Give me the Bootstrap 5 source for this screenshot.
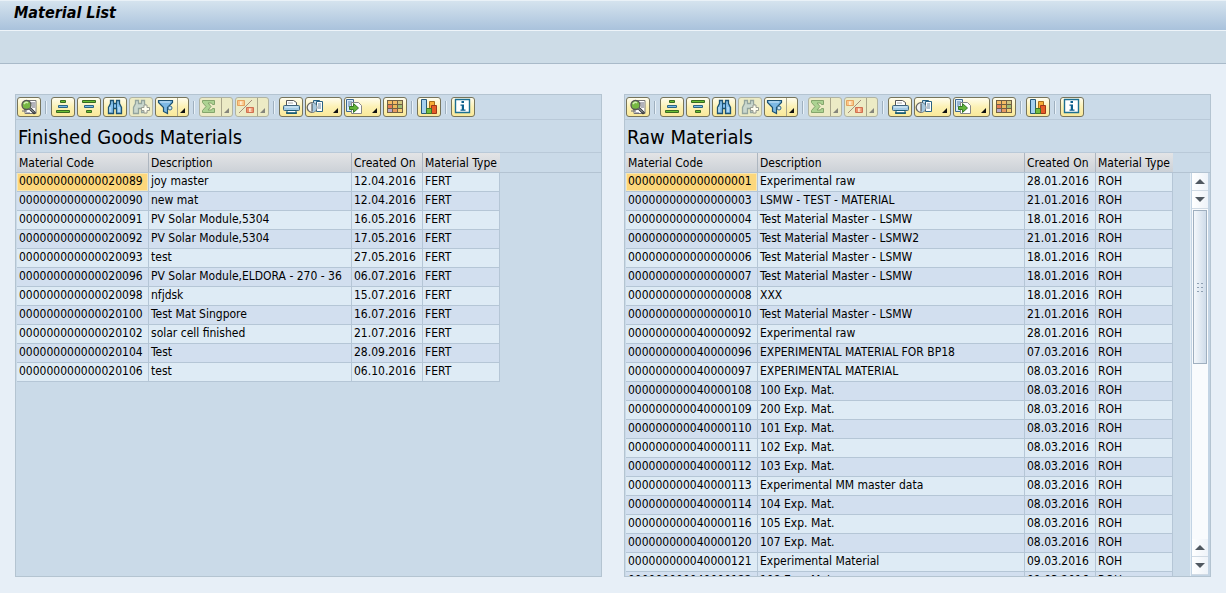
<!DOCTYPE html>
<html lang="en">
<head>
<meta charset="utf-8">
<meta name="viewport" content="width=device-width, initial-scale=1">
<title>Material List</title>
<link href="https://cdn.jsdelivr.net/npm/bootstrap@5.3.0/dist/css/bootstrap.min.css" rel="stylesheet">
<style>
  body { background: #e7eff7; color: #000; font-family: "DejaVu Sans Condensed", "DejaVu Sans", sans-serif; font-size: 12px; line-height: 18px; }
  .title-bar { height: 31px; padding: 0 14px; background: linear-gradient(#d5e3ee, #a9c2dc); border-top: 1px solid #e9f1f7; border-bottom: 1px solid #eef4f9; }
  .title-bar h1 { font-size: 16px; line-height: 24px; font-weight: 700; font-style: italic; }
  .app-bar { height: 33px; background: #cddce7; border-bottom: 1px solid #a9bac9; }
  .workspace { padding: 30px 15px 16px; gap: 22px; }
  .panel { flex: 1 1 0; min-width: 0; background: #cadae8; border: 1px solid #b4c4d1; }
  .tools { height: 25px; padding: 0 1px; gap: 2px; border-bottom: 1px solid #b9c9d8; }
  .tools, .panel h2, .grid-head { flex-shrink: 0; }
  .tool { position: relative; display: flex; align-items: center; flex: none; width: 24px; height: 20px; padding: 0; border: 1px solid #77745a; border-radius: 3px; background: linear-gradient(#fffdee, #fcf1b4 50%, #fae99a); }
  .tool svg { width: 22px; height: 18px; flex: none; }
  .tool.drop { width: 34px; }
  .tool.drop.broad { width: 37px; }
  .tool.drop::after { content: ""; position: absolute; right: 3px; bottom: 3px; border-left: 5px solid transparent; border-bottom: 5px solid #111; }
  .tool.split::before { content: ""; position: absolute; left: 21px; top: 0; bottom: 0; border-left: 1px solid #a9a68a; }
  .tool:disabled { border-color: #b0b3a2; background: #ecebc5; }
  .tool:disabled::after { border-bottom-color: #85867c; }
  .divider { width: 6px; height: 13px; flex: none; background: linear-gradient(90deg, transparent 2px, #9fb0bf 2px, #9fb0bf 3px, #e8f1f8 3px, #e8f1f8 4px, transparent 4px); }
  .panel h2 { height: 33px; padding: 0 2px; font-size: 20px; line-height: 34px; font-weight: 400; border-bottom: 1px solid #b9c9d8; }
  .grid-head { border-bottom: 1px solid #b3c3d2; }
  .grid { margin-left: 1px; table-layout: fixed; border-collapse: separate; border-spacing: 0; white-space: nowrap; }
  .grid th, .grid td { height: 19px; padding: 0 0 0 2px; overflow: hidden; font-weight: 400; line-height: 18px; }
  .grid th { padding-top: 1px; border-right: 1px solid #adb6c0; background: linear-gradient(#e3e4e6, #ccd1d7); }
  .grid th:last-child { border-right: 0; }
  .grid td { padding-bottom: 2px; line-height: 16px; border-right: 1px solid #b5c6d6; border-bottom: 1px solid #b5c6d6; background: #deebf5; }
  .grid tr:nth-child(even) td { background: #d2dfef; }
  .grid tr:first-child td:first-child { background: #fcd77c; box-shadow: inset 0 0 0 1px #f8e6b4; }
  .c-code { width: 132px; } .c-desc { width: 203px; } .c-wide { width: 267px; } .c-date { width: 71px; } .c-type { width: 77px; }
  .scroll { width: 20px; padding: 0 2px 1px 1px; border-left: 1px solid #e6eef5; background: #c3d4e4; }
  .scroll button { width: 100%; height: 18px; padding: 0; border: 0; border-bottom: 1px solid #d0dae4; background: linear-gradient(90deg, #fff, #eef3f9); display: flex; align-items: center; justify-content: center; flex: none; }
  .track { background: #f9fbfd; padding: 1px; }
  .thumb { height: 47%; border: 1px solid #9fafbf; background: linear-gradient(90deg, #f3f7fb, #cfdcea); }
</style>
</head>
<body>
<svg class="d-none" aria-hidden="true">
  <symbol id="i-detail" viewBox="1 1 22 18"><path d="M8 3.500h11v13H8z" fill="#fff" stroke="#777" /><path d="M14 6h4M15 8h3M15 10h3M5 14h5M9 16h4" stroke="#667"/><circle cx="9.500" cy="8" r="4.500" fill="#77b843" stroke="#555" stroke-width="1.300"/><path d="M7 7q2-3 4-1" stroke="#d2efb0" fill="none" stroke-width="1.500"/><path d="M13 11.500l5 5" stroke="#333" stroke-width="2.800"/><path d="M13 11.500l4 4" stroke="#b8c7cf"/></symbol>
  <symbol id="i-asc" viewBox="1 1 22 18"><g stroke-width="1"><path d="M9.500 3.500h5v2h-5zM5.500 13.500h13v2h-13z" fill="#6abf35" stroke="#386b20"/><path d="M7.500 8.500h9v2h-9z" fill="#79b9ea" stroke="#2b6484"/></g></symbol>
  <symbol id="i-desc" viewBox="1 1 22 18"><path d="M5.500 3.500h13v2h-13zM9.500 13.500h5v2h-5z" fill="#6abf35" stroke="#386b20"/><path d="M7.500 8.500h9v2h-9z" fill="#79b9ea" stroke="#2b6484"/></symbol>
  <symbol id="i-find" viewBox="1 1 22 18"><path d="M7.500 3.500h3v3h3v-3h3v3l2 4v6h-5v-5h-3v5h-5v-6l2-4z" fill="#86c1ed" stroke="#1d5272" stroke-width="1.300"/><path d="M7 10v5M16 10v5" stroke="#d5ecfb"/><path d="M10.500 6.500v5M13.500 6.500v5" stroke="#1d5272"/></symbol>
  <symbol id="i-next" viewBox="1 1 22 18"><path d="M6.500 3.500h3v3h3v-3h3v3l2 4v5h-5v-4h-3v5h-5v-6l2-4z" fill="#cad8cf" stroke="#93a49d" stroke-width="1.300"/><path d="M15 8h3v2.500h2.500v3H18V16h-3v-2.500h-2.500v-3H15z" fill="#fffef0" stroke="#999c91"/></symbol>
  <symbol id="i-filter" viewBox="1 1 22 18"><path d="M3.500 3.500h14v2l-5 5v6l-4-2v-4l-5-5z" fill="#7cb9e5" stroke="#1d5272" stroke-width="1.200"/><path d="M5 5h10" stroke="#d0e8f8"/><circle cx="15" cy="11" r="2" fill="#c9e5f8" stroke="#356a8c"/></symbol>
  <symbol id="i-sum" viewBox="1 1 22 18"><path d="M3.500 3.500h12v4h-2l-1-1.500H9L12 9.500 9 13h3.500l1-1.500h2v4h-12v-2L7 9.500 3.500 5.500z" fill="#acd392" stroke="#84a56c"/></symbol>
  <symbol id="i-sub" viewBox="1 1 22 18"><path d="M2.500 3.500h7v5h-7z" fill="#fbc584" stroke="#e5a15f"/><path d="M11.500 10.500h7v5h-7z" fill="#ed936c" stroke="#cf7052"/><path d="M7.500 5H5l1.500 1L5 7.200h2.500M16.500 12H14l1.500 1-1.500 1.200h2.500" fill="none" stroke="#fff5dd"/><path d="M4 16L17 3" stroke="#a58d7a"/></symbol>
  <symbol id="i-print" viewBox="1 1 22 18"><path d="M7.500 8V3.500h7l3 2V8" fill="#fff" stroke="#555"/><path d="M9 6h5" stroke="#aaa"/><rect x="4.500" y="8.500" width="16" height="5" rx="1" fill="#a2cae5" stroke="#40657c"/><path d="M6 10h13" stroke="#e6f4fc"/><path d="M8 13.500h9v3H8z" fill="#fff" stroke="#175a73"/><path d="M7 16h11" stroke="#175a73" stroke-width="1.600"/></symbol>
  <symbol id="i-views" viewBox="1 1 22 18"><path d="M8.500 3.500h6v9h-6z" fill="#c2def1" stroke="#286183"/><path d="M11.500 4.500h6v10h-6z" fill="#fff" stroke="#286183"/><path d="M13 7h3M13 9h3M13 11h3" stroke="#6385a0"/><circle cx="7" cy="10.500" r="4.800" fill="#f3f5f3" stroke="#666" stroke-width="1.300"/><path d="M7 5.700a4.800 4.800 0 0 1 0 9.600z" fill="#a8cae0"/><path d="M7 6.500v8" stroke="#444"/></symbol>
  <symbol id="i-export" viewBox="1 1 22 18"><path d="M2.500 2.500h7v12h-7z" fill="#d8eafa" stroke="#3c6692"/><path d="M4 5h4M4 7h3M4 9h2" stroke="#5c82a8"/><path d="M7.500 5.500h7l3 3v8h-10z" fill="#fff" stroke="#888"/><path d="M5.500 9.500h4v-3l5 4.500-5 4.500v-3h-4z" fill="#63b539" stroke="#357825"/></symbol>
  <symbol id="i-layout" viewBox="1 1 22 18"><path d="M4 3h16v13H4z" fill="#716044"/><path d="M5 4h4v3H5zM10 4h4v3h-4z" fill="#f4bb65"/><path d="M15 4h4v3h-4z" fill="#cfc67f"/><path d="M5 8h4v3H5z" fill="#e57c58"/><path d="M10 8h4v3h-4z" fill="#ebba5b"/><path d="M15 8h4v3h-4z" fill="#9dbd76"/><path d="M5 12h4v3H5z" fill="#b9a9c9"/><path d="M10 12h4v3h-4z" fill="#e99961"/><path d="M15 12h4v3h-4z" fill="#f2cd73"/></symbol>
  <symbol id="i-chart" viewBox="1 1 22 18"><path d="M4.500 2.500h5v14h-5z" fill="#a5d1ef" stroke="#28597a"/><path d="M12.500 4.500h5v7h-5z" fill="#f8ad34" stroke="#a86d19"/><path d="M14.500 8.500h5v8h-5z" fill="#e55b25" stroke="#9c3518"/><path d="M9.500 11.500h5v5h-5z" fill="#72bb3f" stroke="#3c7628"/></symbol>
  <symbol id="i-info" viewBox="1 1 22 18"><path d="M4.500 2.500h14v13h-14z" fill="#fff" stroke="#1c6f91" stroke-width="1.400"/><path d="M10.500 4h2.500v2h-2.500zM9.500 7.500H13v5h1.500v1.200h-5v-1.200h1.300V8.700H9.500z" fill="#0c5f8d"/></symbol>
  <symbol id="i-up" viewBox="0 0 10 5"><path d="M0 5l5-5 5 5z" fill="#505860"/></symbol>
  <symbol id="i-down" viewBox="0 0 10 5"><path d="M0 0l5 5 5-5z" fill="#505860"/></symbol>
</svg>

<div class="d-flex flex-column vh-100">
  <header>
    <div class="title-bar"><h1 class="m-0">Material List</h1></div>
    <div class="app-bar"></div>
  </header>
  <main class="workspace d-flex flex-grow-1 overflow-hidden">
    <section class="panel d-flex flex-column">
      <div class="tools d-flex align-items-center" role="toolbar" aria-label="Finished goods tools"></div>
      <h2 class="m-0 text-truncate">Finished Goods Materials</h2>
      <div class="flex-grow-1 overflow-hidden">
        <div class="grid-head"><table class="grid"><colgroup><col class="c-code"><col class="c-desc"><col class="c-date"><col class="c-type"></colgroup>
          <thead><tr><th scope="col">Material Code</th><th scope="col">Description</th><th scope="col">Created On</th><th scope="col">Material Type</th></tr></thead></table></div>
        <table class="grid" aria-label="Finished Goods Materials"><colgroup><col class="c-code"><col class="c-desc"><col class="c-date"><col class="c-type"></colgroup><tbody id="finished"></tbody></table>
      </div>
    </section>
    <section class="panel d-flex flex-column">
      <div class="tools d-flex align-items-center" role="toolbar" aria-label="Raw material tools"></div>
      <h2 class="m-0 text-truncate">Raw Materials</h2>
      <div class="grid-head"><table class="grid"><colgroup><col class="c-code"><col class="c-wide"><col class="c-date"><col class="c-type"></colgroup>
        <thead><tr><th scope="col">Material Code</th><th scope="col">Description</th><th scope="col">Created On</th><th scope="col">Material Type</th></tr></thead></table></div>
      <div class="d-flex flex-grow-1 overflow-hidden">
        <div class="flex-grow-1 overflow-hidden">
          <table class="grid" aria-label="Raw Materials"><colgroup><col class="c-code"><col class="c-wide"><col class="c-date"><col class="c-type"></colgroup><tbody id="raw"></tbody></table>
        </div>
        <div class="scroll d-flex flex-column flex-shrink-0">
          <button type="button" aria-label="Scroll up"><svg width="10" height="5"><use href="#i-up"/></svg></button>
          <button type="button" aria-label="Scroll down"><svg width="10" height="5"><use href="#i-down"/></svg></button>
          <div class="track flex-grow-1"><div class="thumb d-flex align-items-center justify-content-center"><svg width="6" height="9"><path d="M1 0v9M5 0v9" stroke="#8fa0b2" stroke-width="2" stroke-dasharray="1 3"/></svg></div></div>
          <button type="button" aria-label="Line up"><svg width="10" height="5"><use href="#i-up"/></svg></button>
          <button type="button" aria-label="Line down"><svg width="10" height="5"><use href="#i-down"/></svg></button>
        </div>
      </div>
    </section>
  </main>
</div>

<script src="https://cdn.jsdelivr.net/npm/bootstrap@5.3.0/dist/js/bootstrap.bundle.min.js"></script>
<script>
  // Toolbar entries: icon, label, extra classes, disabled; null is a divider.
  const tools = [
    ['detail', 'Details'], null,
    ['asc', 'Sort ascending'], ['desc', 'Sort descending'], ['find', 'Find'], ['next', 'Find next', '', 1], ['filter', 'Set filter', 'drop split'], null,
    ['sum', 'Total', 'drop split', 1], ['sub', 'Subtotals', 'drop split', 1], null,
    ['print', 'Print'], ['views', 'Views', 'drop broad'], ['export', 'Export', 'drop broad'], ['layout', 'Change layout'], null,
    ['chart', 'Graphic'], null, ['info', 'Information']
  ];
  const bar = tools.map(t => t
    ? `<button type="button" class="tool ${t[2] || ''}" aria-label="${t[1]}"${t[3] ? ' disabled' : ''}><svg><use href="#i-${t[0]}"/></svg></button>`
    : '<span class="divider"></span>').join('');
  document.querySelectorAll('.tools').forEach(el => el.innerHTML = bar);

  const finished = `20089|joy master|12.04.2016
20090|new mat|12.04.2016
20091|PV Solar Module,5304|16.05.2016
20092|PV Solar Module,5304|17.05.2016
20093|test|27.05.2016
20096|PV Solar Module,ELDORA - 270 - 36|06.07.2016
20098|nfjdsk|15.07.2016
20100|Test Mat Singpore|16.07.2016
20102|solar cell finished|21.07.2016
20104|Test|28.09.2016
20106|test|06.10.2016`;
  const raw = `1|Experimental raw|28.01.2016
3|LSMW - TEST - MATERIAL|21.01.2016
4|Test Material Master - LSMW|18.01.2016
5|Test Material Master - LSMW2|21.01.2016
6|Test Material Master - LSMW|18.01.2016
7|Test Material Master - LSMW|18.01.2016
8|XXX|18.01.2016
10|Test Material Master - LSMW|21.01.2016
40000092|Experimental raw|28.01.2016
40000096|EXPERIMENTAL MATERIAL FOR BP18|07.03.2016
40000097|EXPERIMENTAL MATERIAL|08.03.2016
40000108|100 Exp. Mat.|08.03.2016
40000109|200 Exp. Mat.|08.03.2016
40000110|101 Exp. Mat.|08.03.2016
40000111|102 Exp. Mat.|08.03.2016
40000112|103 Exp. Mat.|08.03.2016
40000113|Experimental MM master data|08.03.2016
40000114|104 Exp. Mat.|08.03.2016
40000116|105 Exp. Mat.|08.03.2016
40000120|107 Exp. Mat.|08.03.2016
40000121|Experimental Material|09.03.2016
40000122|108 Exp. Mat.|09.03.2016`;
  function fill(id, data, type) {
    document.getElementById(id).innerHTML = data.split('\n').map(line => {
      const [code, text, date] = line.split('|');
      return `<tr><td>${code.padStart(18, '0')}</td><td>${text}</td><td>${date}</td><td>${type}</td></tr>`;
    }).join('');
  }
  fill('finished', finished, 'FERT');
  fill('raw', raw, 'ROH');
</script>
</body>
</html>
